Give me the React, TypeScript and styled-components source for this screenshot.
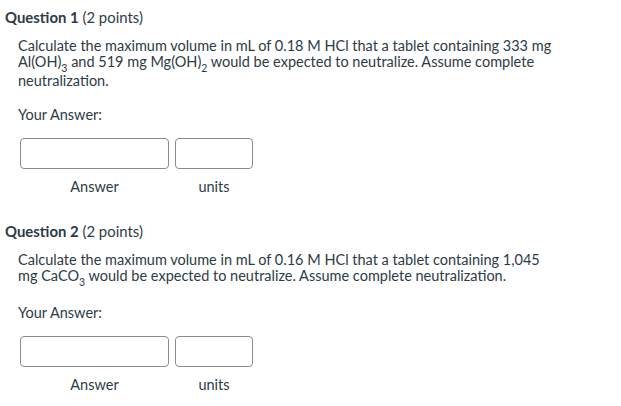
import React from "react";
import styled, { createGlobalStyle } from "styled-components";

const Global = createGlobalStyle`
  html, body { margin: 0; padding: 0; background: #fff; }
  body { font-family: Lato, "Open Sans", sans-serif; color: #2d3b45; }
`;

const Page = styled.div`
  display: flex;
  flex-direction: column;
  padding: 9px 0 0 5px;
`;

const QuestionBlock = styled.section<{ $gap?: number }>`
  display: flex;
  flex-direction: column;
  margin-bottom: ${(p) => p.$gap ?? 0}px;
`;

const Header = styled.div`
  font-size: 14.9px;
  line-height: 16px;
`;

const Title = styled.span`
  font-weight: 700;
`;

const Body = styled.div`
  display: flex;
  flex-direction: column;
  padding-left: 13px;
  padding-top: 13px;
`;

const Text = styled.p`
  margin: 0;
  font-size: 14.5px;
  line-height: 16px;
  width: 540px;
`;

const Sub = styled.span`
  display: inline-block;
  font-size: 10.5px;
  line-height: 10px;
  vertical-align: -5px;
`;

const Prompt = styled.div`
  font-size: 14.5px;
  line-height: 16px;
  margin-top: 18px;
`;

const AnswerRow = styled.div`
  display: flex;
  gap: 6px;
  margin-top: 15px;
  padding-left: 2px;
`;

const Field = styled.div`
  display: flex;
  flex-direction: column;
  align-items: center;
`;

const Input = styled.input<{ $w: number }>`
  box-sizing: border-box;
  width: ${(p) => p.$w}px;
  height: 31px;
  border: 1px solid #8c8c8c;
  border-radius: 4px;
  background: #fff;
  margin: 0;
  padding: 0 6px;
  outline: none;
`;

const Label = styled.label`
  font-size: 14.5px;
  line-height: 16px;
  margin-top: 10px;
`;

type Q = { n: number; text: React.ReactNode; gap: number };

const Question = ({ n, text, gap }: Q) => (
  <QuestionBlock $gap={gap}>
    <Header>
      <Title>Question {n}</Title> (2 points)
    </Header>
    <Body>
      <Text>{text}</Text>
      <Prompt>Your Answer:</Prompt>
      <AnswerRow>
        <Field>
          <Input $w={149} aria-label="Answer" />
          <Label>Answer</Label>
        </Field>
        <Field>
          <Input $w={78} aria-label="units" />
          <Label>units</Label>
        </Field>
      </AnswerRow>
    </Body>
  </QuestionBlock>
);

export default function App() {
  return (
    <Page>
      <Global />
      <Question
        n={1}
        gap={28}
        text={
          <>
            Calculate the maximum volume in mL of 0.18 M HCl that a tablet containing 333 mg
            Al(OH)<Sub>3</Sub> and 519 mg Mg(OH)<Sub>2</Sub> would be expected to neutralize. Assume complete
            neutralization.
          </>
        }
      />
      <Question
        n={2}
        gap={0}
        text={
          <>
            Calculate the maximum volume in mL of 0.16 M HCl that a tablet containing 1,045 mg
            CaCO<Sub>3</Sub> would be expected to neutralize. Assume complete neutralization.
          </>
        }
      />
    </Page>
  );
}
